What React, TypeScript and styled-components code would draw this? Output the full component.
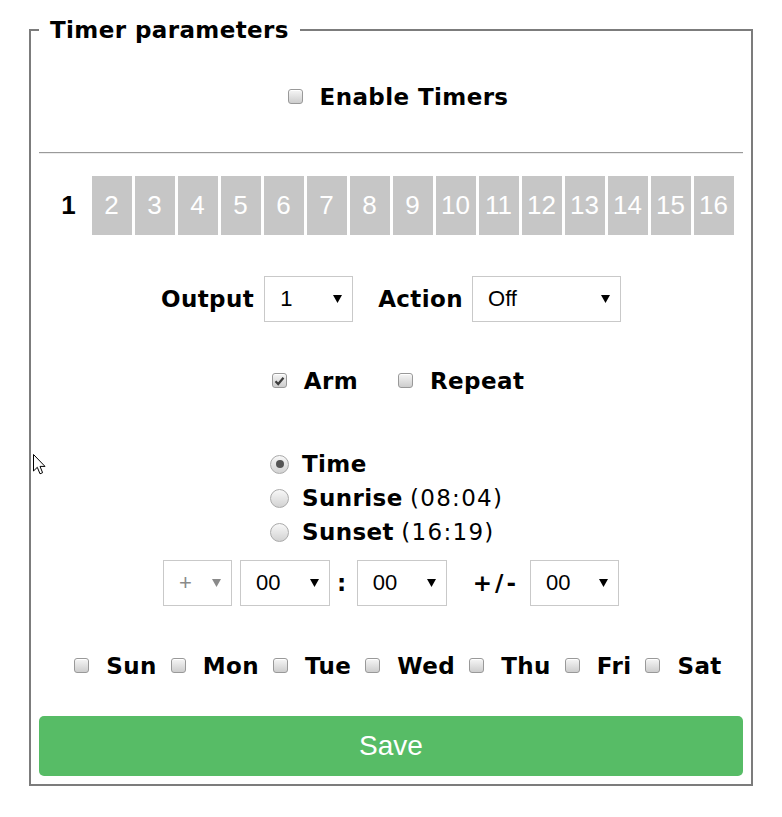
import React from 'react'
import styled, { createGlobalStyle } from 'styled-components'

const GlobalStyle = createGlobalStyle`
  html, body {
    margin: 0;
    padding: 0;
    background: #ffffff;
  }
  body {
    font-family: "DejaVu Sans", Verdana, sans-serif;
    color: #000000;
  }
`

const Page = styled.div`
  position: relative;
  padding: 15px 0 30px 29px;
`

const Fieldset = styled.fieldset`
  box-sizing: border-box;
  width: 724px;
  margin: 0;
  padding: 0 8px 8px;
  border: 2px solid #7c7c7c;
  display: flex;
  flex-direction: column;
`

const Legend = styled.legend`
  padding: 2px 11px 0;
  font-size: 23px;
  font-weight: bold;
  letter-spacing: 0.4px;
  line-height: 27px;
`

const CheckRow = styled.div<{ $top: number }>`
  display: flex;
  align-items: center;
  justify-content: center;
  height: 27px;
  margin-top: ${(p) => p.$top}px;
  padding-left: 14px;
`

const CheckItem = styled.label<{ $after: number }>`
  display: flex;
  align-items: center;
  gap: 17px;
  margin-right: ${(p) => p.$after}px;
  font-size: 23px;
  font-weight: bold;
  letter-spacing: 0.4px;
  &:last-child {
    margin-right: 0;
  }
`

const Box = styled.span`
  box-sizing: border-box;
  flex-shrink: 0;
  width: 15px;
  height: 15px;
  border: 1px solid #999999;
  border-radius: 3px;
  background: linear-gradient(#f6f6f6, #cdcdcd);
  box-shadow: inset 0 1px 0 #ffffff;
  display: flex;
  align-items: center;
  justify-content: center;
`

const Rule = styled.hr`
  width: 100%;
  margin: 42px 0 0;
  height: 0;
  border: 0;
  border-top: 1px solid #9a9a9a;
  border-bottom: 1px solid #ececec;
`

const TabBar = styled.div`
  display: flex;
  justify-content: center;
  gap: 3px;
  margin-top: 22px;
`

const Tab = styled.div<{ $active?: boolean }>`
  width: 40px;
  height: 59px;
  display: flex;
  align-items: center;
  justify-content: center;
  font-family: "Liberation Sans", Arial, sans-serif;
  font-size: 26px;
  font-weight: ${(p) => (p.$active ? 'bold' : 'normal')};
  color: ${(p) => (p.$active ? '#000000' : '#ffffff')};
  background: ${(p) => (p.$active ? 'transparent' : '#c6c6c6')};
`

const FieldRow = styled.div<{ $top: number }>`
  display: flex;
  align-items: center;
  justify-content: center;
  height: 46px;
  margin-top: ${(p) => p.$top}px;
`

const FieldLabel = styled.span`
  font-size: 23px;
  font-weight: bold;
  letter-spacing: 0.4px;
`

const SelectBox = styled.div<{ $width: number; $disabled?: boolean }>`
  box-sizing: border-box;
  flex-shrink: 0;
  width: ${(p) => p.$width}px;
  height: 46px;
  border: 1px solid #c9c9c9;
  background: #ffffff;
  display: flex;
  align-items: center;
  justify-content: space-between;
  padding: 0 10px 0 15px;
  font-family: "Liberation Sans", Arial, sans-serif;
  font-size: 22px;
  color: ${(p) => (p.$disabled ? '#8a8a8a' : '#000000')};
`

const RadioGroup = styled.div`
  align-self: center;
  width: 242px;
  margin-top: 53px;
  display: flex;
  flex-direction: column;
`

const RadioItem = styled.label`
  display: flex;
  align-items: center;
  gap: 13px;
  height: 34px;
  font-size: 23px;
  white-space: nowrap;

  b {
    letter-spacing: 0.4px;
  }
`

const RadioNote = styled.span`
  letter-spacing: 1.3px;
`

const RadioDot = styled.span`
  box-sizing: border-box;
  flex-shrink: 0;
  width: 19px;
  height: 19px;
  border-radius: 50%;
  border: 1px solid #aaaaaa;
  background: linear-gradient(#f8f8f8, #d2d2d2);
  display: flex;
  align-items: center;
  justify-content: center;
`

const RadioInner = styled.span`
  width: 8px;
  height: 8px;
  border-radius: 50%;
  background: #555555;
`

const Sep = styled.span<{ $l: number; $r: number; $spacing?: number }>`
  margin: 0 ${(p) => p.$r}px 0 ${(p) => p.$l}px;
  font-size: 23px;
  font-weight: bold;
  letter-spacing: ${(p) => p.$spacing ?? 1.5}px;
`

const SaveButton = styled.button`
  margin-top: 37px;
  height: 60px;
  width: 100%;
  border: 0;
  border-radius: 5px;
  background: #57bc66;
  color: #ffffff;
  font-family: "Liberation Sans", Arial, sans-serif;
  font-size: 28px;
  cursor: pointer;
`

const Cursor = styled.svg`
  position: absolute;
  left: 33px;
  top: 454px;
`

const Check = ({ checked }: { checked?: boolean }) => (
  <Box>
    {checked && (
      <svg width="11" height="10" viewBox="0 0 11 10">
        <path d="M1.5 5.2 L4.2 8 L9.5 1.8" fill="none" stroke="#3c3c3c" strokeWidth="2.2" />
      </svg>
    )}
  </Box>
)

const Arrow = ({ color = '#000' }: { color?: string }) => (
  <svg width="9" height="8" viewBox="0 0 9 8">
    <path d="M0 0 H9 L4.5 8 Z" fill={color} />
  </svg>
)

const Select = ({ value, width, disabled }: { value: string; width: number; disabled?: boolean }) => (
  <SelectBox $width={width} $disabled={disabled}>
    <span>{value}</span>
    <Arrow color={disabled ? '#8a8a8a' : '#000'} />
  </SelectBox>
)

const days = ['Sun', 'Mon', 'Tue', 'Wed', 'Thu', 'Fri', 'Sat']
const tabs = Array.from({ length: 16 }, (_, i) => i + 1)

export default function App() {
  return (
    <Page>
      <GlobalStyle />
      <Fieldset>
        <Legend>Timer parameters</Legend>
        <CheckRow $top={39}>
          <CheckItem $after={0}>
            <Check />
            Enable Timers
          </CheckItem>
        </CheckRow>
        <Rule />
        <TabBar>
          {tabs.map((n) => (
            <Tab key={n} $active={n === 1}>
              {n}
            </Tab>
          ))}
        </TabBar>
        <FieldRow $top={41}>
          <FieldLabel>Output</FieldLabel>
          <Sep $l={10} $r={0} />
          <Select value="1" width={89} />
          <Sep $l={25} $r={0} />
          <FieldLabel>Action</FieldLabel>
          <Sep $l={9} $r={0} />
          <Select value="Off" width={149} />
        </FieldRow>
        <CheckRow $top={45}>
          <CheckItem $after={40}>
            <Check checked />
            Arm
          </CheckItem>
          <CheckItem $after={0}>
            <Check />
            Repeat
          </CheckItem>
        </CheckRow>
        <RadioGroup>
          <RadioItem>
            <RadioDot>
              <RadioInner />
            </RadioDot>
            <b>Time</b>
          </RadioItem>
          <RadioItem>
            <RadioDot />
            <span>
              <b>Sunrise</b> <RadioNote>(08:04)</RadioNote>
            </span>
          </RadioItem>
          <RadioItem>
            <RadioDot />
            <span>
              <b>Sunset</b> <RadioNote>(16:19)</RadioNote>
            </span>
          </RadioItem>
        </RadioGroup>
        <FieldRow $top={11}>
          <Select value="+" width={69} disabled />
          <Sep $l={8} $r={0} />
          <Select value="00" width={90} />
          <Sep $l={7} $r={9}>:</Sep>
          <Select value="00" width={90} />
          <Sep $l={26} $r={11} $spacing={3}>+/-</Sep>
          <Select value="00" width={89} />
        </FieldRow>
        <CheckRow $top={46}>
          {days.map((d) => (
            <CheckItem key={d} $after={14}>
              <Check />
              {d}
            </CheckItem>
          ))}
        </CheckRow>
        <SaveButton>Save</SaveButton>
      </Fieldset>
      <Cursor width="13" height="21" viewBox="0 0 13 21">
        <path d="M0.5 0.5 V17 L4.3 13.3 L7 19.8 L9.6 18.7 L7 12.4 L12 12.4 Z" fill="#ffffff" stroke="#000000" strokeWidth="1" />
      </Cursor>
    </Page>
  )
}
